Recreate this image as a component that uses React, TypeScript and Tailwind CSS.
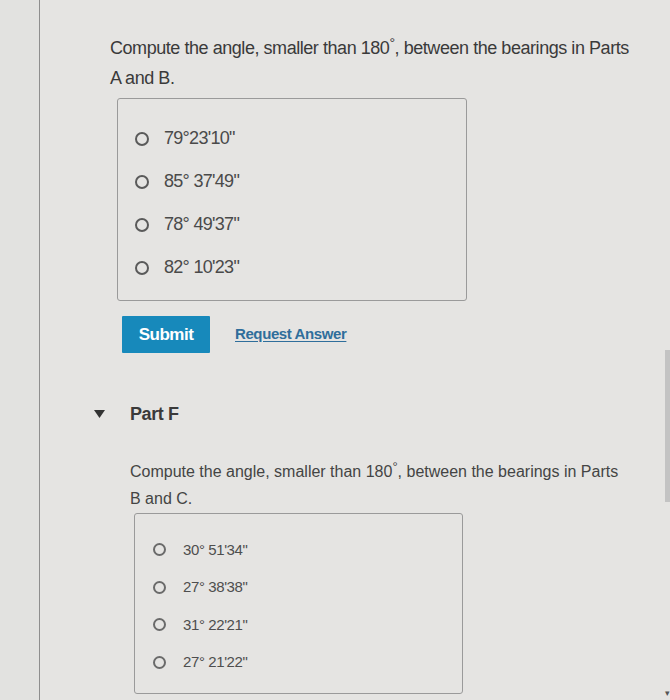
import React from "react";

const font = { fontFamily: '"Liberation Sans", Arial, sans-serif' };

function Radio({ size }: { size: "lg" | "sm" }) {
  return size === "lg" ? (
    <span className="inline-block w-[14px] h-[14px] rounded-full border-[2px] border-[#5a5a5a] shrink-0" />
  ) : (
    <span className="inline-block w-[13px] h-[13px] rounded-full border-[2px] border-[#6a6a6a] shrink-0" />
  );
}

export default function App() {
  const opts1 = ["79°23'10\"", "85° 37'49\"", "78° 49'37\"", "82° 10'23\""];
  const opts2 = ["30° 51'34\"", "27° 38'38\"", "31° 22'21\"", "27° 21'22\""];
  return (
    <div
      className="w-[670px] h-[700px] overflow-hidden flex bg-[#e5e4e2] text-[#3a3a3a]"
      style={font}
    >
      <div className="w-[40px] shrink-0 border-r border-[#8e8e8e] bg-[#e2e2e0]" />
      <div className="flex-1 flex flex-col pl-[70px] pt-[34px]">
        <p className="text-[18px] leading-[29px] tracking-[-0.45px] text-[#3a3a3a]">
          Compute the angle, smaller than 180<span className="relative -top-[6px] text-[14px]">°</span>, between the bearings in Parts
          <br />A and B.
        </p>
        <div className="mt-[5px] ml-[7px] w-[350px] h-[203px] border border-[#9a9a9a] rounded-[3px] flex flex-col pt-[18px] pl-[17px]">
          {opts1.map((o) => (
            <div key={o} className="h-[43px] flex items-center gap-[15px]">
              <Radio size="lg" />
              <span className="text-[18px] tracking-[-0.7px] text-[#4a4a4a]">{o}</span>
            </div>
          ))}
        </div>
        <div className="mt-[15px] ml-[12px] flex items-center gap-[25px]">
          <button className="w-[88px] h-[37px] bg-[#1789bb] text-white text-[17px] font-bold tracking-[-0.5px] rounded-[1px]">
            Submit
          </button>
          <a className="text-[15px] font-bold tracking-[-0.4px] text-[#2f6e9b] underline underline-offset-2">
            Request Answer
          </a>
        </div>
        <div className="mt-[49px] -ml-[16px] flex items-center gap-[25px] h-[24px]">
          <svg width="11" height="8" viewBox="0 0 11 8">
            <polygon points="0,0 11,0 5.5,8" fill="#333" />
          </svg>
          <span className="text-[18px] font-bold text-[#3a3a3a] tracking-[-0.4px]">Part F</span>
        </div>
        <p className="mt-[33px] ml-[20px] text-[16px] leading-[26px] tracking-[0px] text-[#444]">
          Compute the angle, smaller than 180<span className="relative -top-[6px] text-[13px]">°</span>, between the bearings in Parts
          <br />B and C.
        </p>
        <div className="mt-[1px] ml-[24px] w-[329px] h-[181px] border border-[#9a9a9a] rounded-[3px] flex flex-col pt-[17px] pl-[18px]">
          {opts2.map((o) => (
            <div key={o} className="h-[37.5px] flex items-center gap-[17px]">
              <Radio size="sm" />
              <span className="text-[15px] tracking-[-0.4px] text-[#4e4e4e]">{o}</span>
            </div>
          ))}
        </div>
      </div>
      <div className="w-[8px] shrink-0 flex flex-col items-end">
        <div className="mt-[350px] w-[5px] h-[152px] bg-[#c3c3c3]" />
        <div className="mt-auto mb-[2px] text-[9px] leading-none text-[#555]">▾</div>
      </div>
    </div>
  );
}
